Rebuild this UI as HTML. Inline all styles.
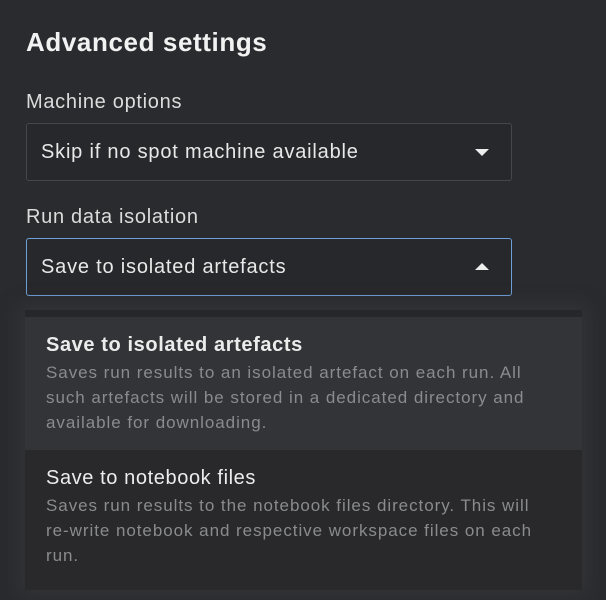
<!DOCTYPE html>
<html><head><style>
body{margin:0;width:606px;height:600px;background:#2a2b2e;font-family:"Liberation Sans",sans-serif;position:relative;overflow:hidden;color:#e6e6e6}
.a{position:absolute}
h1{position:absolute;left:26px;top:27px;margin:0;font-size:26px;font-weight:bold;color:#f2f2f2;letter-spacing:0.6px}
.lbl{font-size:20px;color:#dcdcdc;letter-spacing:0.7px}
.sel{left:26px;width:486px;height:58px;border:1px solid #46474a;border-radius:3px;background:#27282b;box-sizing:border-box}
.sel span{position:absolute;left:14px;top:17px;font-size:20px;color:#e8e8e8;letter-spacing:0.8px}
.tri{position:absolute;left:448px;top:25px;width:0;height:0;border-left:7px solid transparent;border-right:7px solid transparent}
.menu{left:25px;top:310px;width:557px;height:280px;background:#26272a;box-shadow:0 0 18px 6px rgba(60,62,66,0.45)}
.it{position:absolute;left:0;width:557px}
.t{position:absolute;left:21px;font-size:20px;color:#ececec;letter-spacing:0.6px}
.d{position:absolute;left:21px;font-size:17px;line-height:25px;color:#8a8b8e;white-space:nowrap;letter-spacing:0.95px}
</style></head><body>
<h1>Advanced settings</h1>
<div class="a lbl" style="left:26px;top:91px">Machine options</div>
<div class="a sel" style="top:123px"><span>Skip if no spot machine available</span><div class="tri" style="top:25px;border-top:7px solid #eee"></div></div>
<div class="a lbl" style="left:26px;top:206px">Run data isolation</div>
<div class="a sel" style="top:238px;border-color:#6f9fd8"><span>Save to isolated artefacts</span><div class="tri" style="top:24px;border-bottom:7px solid #eee"></div></div>
<div class="a menu">
<div class="it" style="top:7px;height:133px;background:#333437">
<div class="t" style="top:17px;font-weight:bold">Save to isolated artefacts</div>
<div class="d" style="top:43px">Saves run results to an isolated artefact on each run. All<br>such artefacts will be stored in a dedicated directory and<br>available for downloading.</div>
</div>
<div class="it" style="top:140px;height:140px;background:#29292c">
<div class="t" style="top:17px">Save to notebook files</div>
<div class="d" style="top:43px">Saves run results to the notebook files directory. This will<br>re-write notebook and respective workspace files on each<br>run.</div>
</div>
</div>
</body></html>
